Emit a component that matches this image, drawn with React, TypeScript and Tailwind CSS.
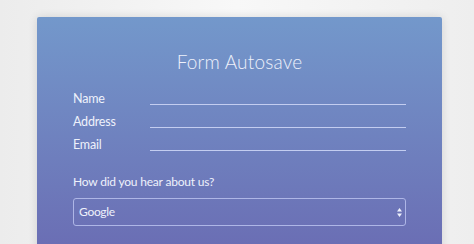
const fields = ["Name", "Address", "Email"];

function SelectArrows() {
  return (
    <svg width="5" height="9" viewBox="0 0 5 9" className="fill-[#eef1fb]">
      <path d="M2.5 0 L5 3.5 L0 3.5 Z" />
      <path d="M0 5.5 L5 5.5 L2.5 9 Z" />
    </svg>
  );
}

export default function App() {
  return (
    <div
      className="h-[244px] w-[474px] overflow-hidden bg-gradient-to-r from-[#ececec] via-[#f8f8f8] to-[#eeeeee] pl-[37px] pt-[17px]"
      style={{ fontFamily: "Lato, 'Open Sans', sans-serif" }}
    >
      <div className="h-[240px] w-[405px] rounded-t-[2px] bg-gradient-to-b from-[#7398cb] to-[#6a6cb3] shadow-[0_0_10px_rgba(0,0,0,0.12)] px-[36px] pt-[33px] text-[#eef1fb]">
        <h1 className="text-center text-[19px] font-light leading-[24px] tracking-[0.2px]">Form Autosave</h1>
        <div className="mt-[13px] flex flex-col">
          {fields.map((f) => (
            <div key={f} className="flex h-[23px] items-center">
              <span className="w-[77px] text-[12.5px] leading-[16px] tracking-[-0.2px]">{f}</span>
              <div className="mt-[11px] h-[1px] flex-1 bg-[#c3cdf0]" />
            </div>
          ))}
        </div>
        <p className="mt-[18px] text-[12px] leading-[16px] tracking-[-0.2px]">How did you hear about us?</p>
        <div className="mt-[8px] flex h-[28px] items-center justify-between rounded-[3px] border border-[#aeb6e6] pl-[5px] pr-[3px]">
          <span className="text-[12px] tracking-[-0.3px]">Google</span>
          <SelectArrows />
        </div>
      </div>
    </div>
  );
}
